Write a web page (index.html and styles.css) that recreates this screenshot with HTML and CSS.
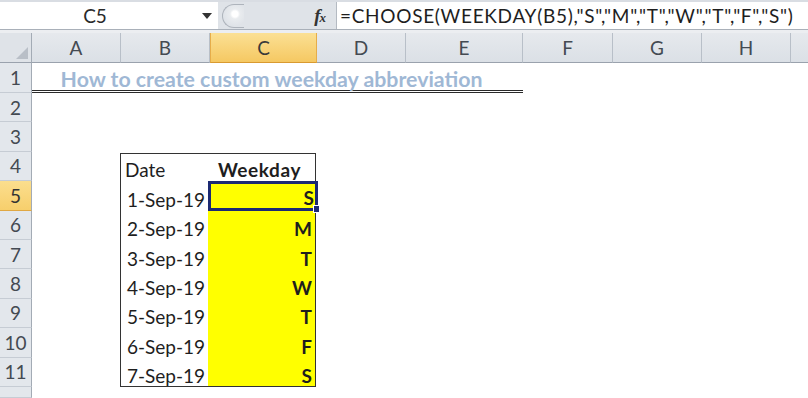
FILE: index.html
```html
<!DOCTYPE html>
<html>
<head>
<meta charset="utf-8">
<link rel="stylesheet" href="styles.css">
</head>
<body>
<div class="app">
  <div class="fbar">
    <div class="namebox"><span class="ref">C5</span><span class="dd"></span></div>
    <div class="fxzone"><span class="grip"></span><span class="fx">f<span class="fxsub">x</span></span></div>
    <div class="formula">=CHOOSE(WEEKDAY(B5),"S","M","T","W","T","F","S")</div>
  </div>
  <div class="strip"></div>
  <div class="sheet">
    <div class="corner"><span class="tri"></span></div>
    <div class="ch">A</div>
    <div class="ch">B</div>
    <div class="ch sel">C</div>
    <div class="ch">D</div>
    <div class="ch">E</div>
    <div class="ch">F</div>
    <div class="ch">G</div>
    <div class="ch">H</div>
    <div class="ch last"></div>

    <div class="rh r1">1</div>
    <div class="rh r2">2</div>
    <div class="rh r3">3</div>
    <div class="rh r4">4</div>
    <div class="rh r5 sel">5</div>
    <div class="rh r6">6</div>
    <div class="rh r7">7</div>
    <div class="rh r8">8</div>
    <div class="rh r9">9</div>
    <div class="rh r10">10</div>
    <div class="rh r11">11</div>
    <div class="rh r12"></div>

    <div class="title">How to create custom weekday abbreviation</div>

    <div class="frame"></div>
    <div class="fill"></div>

    <div class="cell cb r4 left">Date</div>
    <div class="cell cc r4 head">Weekday</div>

    <div class="cell cb r5 num">1-Sep-19</div>
    <div class="cell cb r6 num">2-Sep-19</div>
    <div class="cell cb r7 num">3-Sep-19</div>
    <div class="cell cb r8 num">4-Sep-19</div>
    <div class="cell cb r9 num">5-Sep-19</div>
    <div class="cell cb r10 num">6-Sep-19</div>
    <div class="cell cb r11 num">7-Sep-19</div>

    <div class="cell cc r5 day active">S</div>
    <div class="cell cc r6 day">M</div>
    <div class="cell cc r7 day">T</div>
    <div class="cell cc r8 day">W</div>
    <div class="cell cc r9 day">T</div>
    <div class="cell cc r10 day">F</div>
    <div class="cell cc r11 day">S</div>
  </div>
</div>
</body>
</html>
```

FILE: styles.css
```css
html, body {
  margin: 0;
  padding: 0;
  background: #ffffff;
}
.app {
  width: 808px;
  height: 398px;
  overflow: hidden;
  font-family: "Lato", "Liberation Sans", sans-serif;
  font-size: 19px;
  color: #1e1e1e;
  display: flex;
  flex-direction: column;
}

/* formula bar */
.fbar {
  height: 30px;
  display: flex;
  box-sizing: border-box;
  border-top: 2px solid #d9dde3;
  border-bottom: 1px solid #a9b0b9;
  background: #ffffff;
}
.namebox {
  width: 218px;
  display: flex;
  align-items: center;
}
.ref {
  width: 190px;
  text-align: center;
  color: #2a2a2a;
}
.dd {
  width: 0;
  height: 0;
  border-left: 5px solid transparent;
  border-right: 5px solid transparent;
  border-top: 6px solid #333;
  margin-left: auto;
  margin-right: 6px;
}
.fxzone {
  width: 119px;
  background: #dfe3e8;
  display: flex;
  align-items: center;
  justify-content: space-between;
  box-sizing: border-box;
  border-right: 1px solid #b4bac2;
}
.grip {
  width: 22px;
  height: 24px;
  border: 1px solid #aeb4bc;
  border-right: none;
  border-radius: 12px 0 0 12px;
  background: radial-gradient(circle at 12px 9px, #ffffff 0 3px, #e9ecef 5px, #dfe3e8 12px);
  margin-left: 4px;
  box-sizing: border-box;
}
.fx {
  font-family: "Liberation Serif", serif;
  font-style: italic;
  font-weight: bold;
  font-size: 19px;
  color: #333;
  margin-right: 11px;
  letter-spacing: -1px;
}
.fxsub {
  font-size: 13px;
}
.formula {
  flex: 1;
  display: flex;
  align-items: center;
  padding-left: 3px;
  color: #1e1e1e;
  white-space: nowrap;
  letter-spacing: 0.7px;
}
.strip {
  height: 3px;
  background: #eceef1;
}

/* sheet grid */
.sheet {
  flex: 1;
  display: grid;
  grid-template-columns: 32px 89px 89px 107px 89px 117px 90px 89px 89px 1fr;
  grid-template-rows: 30px 30px repeat(10, 29.4px) 1fr;
}
.corner {
  grid-column: 1;
  grid-row: 1;
  background: #dfe3e8;
  border-right: 1px solid #a3abb5;
  border-bottom: 1px solid #9aa2ad;
  box-sizing: border-box;
  position: relative;
}
.tri {
  position: absolute;
  right: 3px;
  bottom: 3px;
  width: 0;
  height: 0;
  border-left: 12px solid transparent;
  border-bottom: 12px solid #b9bfc7;
}
.ch {
  grid-row: 1;
  background: linear-gradient(#e6e9ed, #dbe0e6);
  border-right: 1px solid #b8bfc8;
  border-bottom: 1px solid #9aa2ad;
  box-sizing: border-box;
  display: flex;
  align-items: center;
  justify-content: center;
  color: #444a52;
}
.ch.sel {
  background: linear-gradient(#fbe094, #f5c862);
  border-right: 1px solid #e6ad4a;
  border-bottom: 1px solid #d99a30;
  border-left: 1px solid #e6ad4a;
  color: #3a3a3a;
}
.ch.last {
  border-right: none;
}
.rh {
  grid-column: 1;
  background: #e3e7ec;
  border-right: 1px solid #a3abb5;
  border-bottom: 1px solid #c6ccd4;
  box-sizing: border-box;
  display: flex;
  align-items: center;
  justify-content: center;
  color: #444a52;
}
.rh.sel {
  background: linear-gradient(#fbde8e, #f7cf6c);
  border-bottom: 1px solid #e0a843;
  color: #333;
}
.r1 { grid-row: 2; }
.r2 { grid-row: 3; }
.r3 { grid-row: 4; }
.r4 { grid-row: 5; }
.r5 { grid-row: 6; }
.r6 { grid-row: 7; }
.r7 { grid-row: 8; }
.r8 { grid-row: 9; }
.r9 { grid-row: 10; }
.r10 { grid-row: 11; }
.r11 { grid-row: 12; }
.r12 { grid-row: 13; }

.title {
  grid-column: 2 / 7;
  grid-row: 2;
  border-bottom: 3px double #2a2a2a;
  display: flex;
  align-items: center;
  justify-content: center;
  font-weight: bold;
  font-size: 21.3px;
  color: #9fb8d5;
  padding-right: 12px;
  padding-top: 4px;
  box-sizing: border-box;
}

.frame {
  grid-column: 3 / 5;
  grid-row: 5 / 13;
  border: 1px solid #333;
  margin-left: -1px;
  margin-top: 1px;
  margin-right: 1px;
}
.fill {
  grid-column: 4;
  grid-row: 6 / 13;
  background: #ffff00;
  margin-left: -2px;
  margin-right: 2px;
  margin-bottom: 1px;
}
.cell {
  display: flex;
  align-items: center;
  padding-top: 7px;
  box-sizing: border-box;
}
.cb { grid-column: 3; }
.cc { grid-column: 4; }
.left {
  padding-left: 4px;
}
.head {
  font-weight: bold;
  justify-content: center;
  padding-right: 8px;
  letter-spacing: 0.6px;
}
.num {
  justify-content: flex-end;
  padding-right: 5px;
}
.day {
  justify-content: flex-end;
  font-weight: bold;
  padding-right: 5px;
}
.active {
  border: 3px solid #1c2a73;
  margin-left: -2px;
  margin-right: -1px;
  padding-right: 1px;
  padding-top: 4px;
  position: relative;
}
.active::after {
  content: "";
  position: absolute;
  right: -5px;
  bottom: -5px;
  width: 5px;
  height: 6px;
  background: #1c2a73;
  border: 1px solid #ffffff;
}
```
